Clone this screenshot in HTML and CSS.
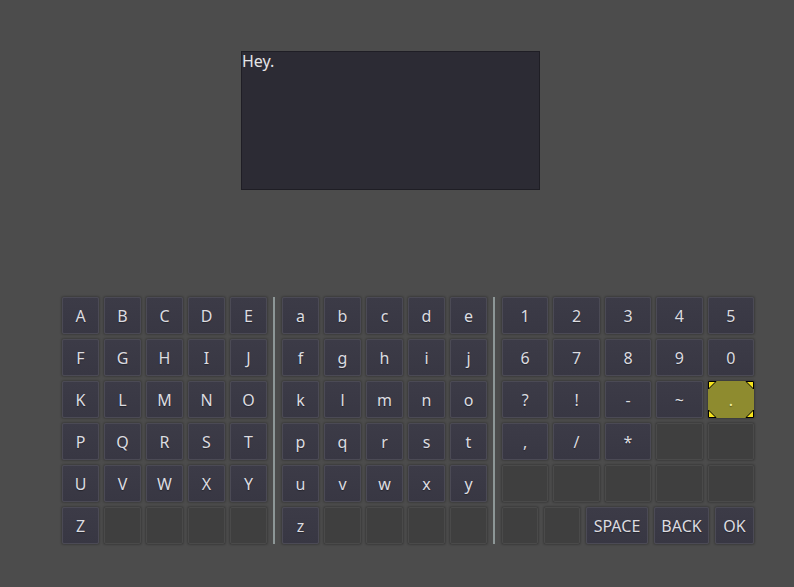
FILE: index.html
```html
<!DOCTYPE html>
<html>
<head>
<meta charset="utf-8">
<link rel="stylesheet" href="styles.css">
</head>
<body>
<div class="screen">
  <div class="display">Hey.</div>
  <div class="keyboard">
    <div class="section letters">
      <div class="key">A</div><div class="key">B</div><div class="key">C</div><div class="key">D</div><div class="key">E</div>
      <div class="key">F</div><div class="key">G</div><div class="key">H</div><div class="key">I</div><div class="key">J</div>
      <div class="key">K</div><div class="key">L</div><div class="key">M</div><div class="key">N</div><div class="key">O</div>
      <div class="key">P</div><div class="key">Q</div><div class="key">R</div><div class="key">S</div><div class="key">T</div>
      <div class="key">U</div><div class="key">V</div><div class="key">W</div><div class="key">X</div><div class="key">Y</div>
      <div class="key">Z</div><div class="key empty"></div><div class="key empty"></div><div class="key empty"></div><div class="key empty"></div>
    </div>
    <div class="sep"></div>
    <div class="section letters">
      <div class="key">a</div><div class="key">b</div><div class="key">c</div><div class="key">d</div><div class="key">e</div>
      <div class="key">f</div><div class="key">g</div><div class="key">h</div><div class="key">i</div><div class="key">j</div>
      <div class="key">k</div><div class="key">l</div><div class="key">m</div><div class="key">n</div><div class="key">o</div>
      <div class="key">p</div><div class="key">q</div><div class="key">r</div><div class="key">s</div><div class="key">t</div>
      <div class="key">u</div><div class="key">v</div><div class="key">w</div><div class="key">x</div><div class="key">y</div>
      <div class="key">z</div><div class="key empty"></div><div class="key empty"></div><div class="key empty"></div><div class="key empty"></div>
    </div>
    <div class="sep"></div>
    <div class="section numbers">
      <div class="key">1</div><div class="key">2</div><div class="key">3</div><div class="key">4</div><div class="key">5</div>
      <div class="key">6</div><div class="key">7</div><div class="key">8</div><div class="key">9</div><div class="key">0</div>
      <div class="key">?</div><div class="key">!</div><div class="key">-</div><div class="key">~</div>
      <div class="key focus">.
        <svg class="corner tl" width="9" height="9" viewBox="0 0 9 9"><polygon points="0.5,0.5 8,0.5 0.5,8" /></svg>
        <svg class="corner tr" width="9" height="9" viewBox="0 0 9 9"><polygon points="8.5,0.5 1,0.5 8.5,8" /></svg>
        <svg class="corner bl" width="9" height="9" viewBox="0 0 9 9"><polygon points="0.5,8.5 8,8.5 0.5,1" /></svg>
        <svg class="corner br" width="9" height="9" viewBox="0 0 9 9"><polygon points="8.5,8.5 1,8.5 8.5,1" /></svg>
      </div>
      <div class="key">,</div><div class="key">/</div><div class="key">*</div><div class="key empty"></div><div class="key empty"></div>
      <div class="key empty"></div><div class="key empty"></div><div class="key empty"></div><div class="key empty"></div><div class="key empty"></div>
      <div class="bottom-row">
        <div class="key empty w36"></div>
        <div class="key empty w36"></div>
        <div class="key w62">SPACE</div>
        <div class="key w55">BACK</div>
        <div class="key w39">OK</div>
      </div>
    </div>
  </div>
</div>
</body>
</html>
```

FILE: styles.css
```css
html, body {
  margin: 0;
  padding: 0;
  background: #4c4c4c;
  width: 794px;
  height: 587px;
  overflow: hidden;
}

.screen {
  padding-top: 51px;
  font-family: "Noto Sans", "DejaVu Sans", sans-serif;
}

.display {
  margin-left: 241px;
  width: 299px;
  height: 139px;
  box-sizing: border-box;
  border: 1px solid #1f1e25;
  background: #2c2b34;
  color: #e4e4e6;
  font-size: 16px;
  line-height: 18px;
}

.keyboard {
  display: flex;
  align-items: stretch;
  margin: 107px 0 0 62px;
}

.section {
  display: grid;
  grid-auto-rows: 37px;
  gap: 5px;
}

.letters {
  grid-template-columns: repeat(5, 37px);
}

.numbers {
  width: 252px;
  grid-template-columns: repeat(5, 1fr);
}

.sep {
  width: 2px;
  margin: 0 7px 0 6px;
  background: #8d9797;
}

.key {
  position: relative;
  box-sizing: border-box;
  display: flex;
  align-items: center;
  justify-content: center;
  border: 1px solid #4b4a55;
  border-radius: 2px;
  background: linear-gradient(#3c3b47, #383743);
  box-shadow: 0 0 2px 1px rgba(0, 0, 0, 0.22);
  color: #dcdce0;
  font-size: 16px;
  line-height: 20px;
  text-shadow: 0 1px 1px rgba(0, 0, 0, 0.35);
}

.key.empty {
  border-color: #4a4a4a;
  background: #3f3f3f;
}

.key.focus {
  border: none;
  background: #8e8b2f;
  color: #f2eea0;
}

.corner {
  position: absolute;
  display: block;
}
.corner polygon {
  fill: #f5e21c;
  stroke: #000;
  stroke-width: 1;
}
.corner.tl { left: 0; top: 0; }
.corner.tr { right: 0; top: 0; }
.corner.bl { left: 0; bottom: 0; }
.corner.br { right: 0; bottom: 0; }

.bottom-row {
  grid-column: 1 / -1;
  display: flex;
  gap: 6px;
}

.w36 { width: 36px; }
.w62 { width: 62px; }
.w55 { width: 55px; }
.w39 { width: 39px; }
```
